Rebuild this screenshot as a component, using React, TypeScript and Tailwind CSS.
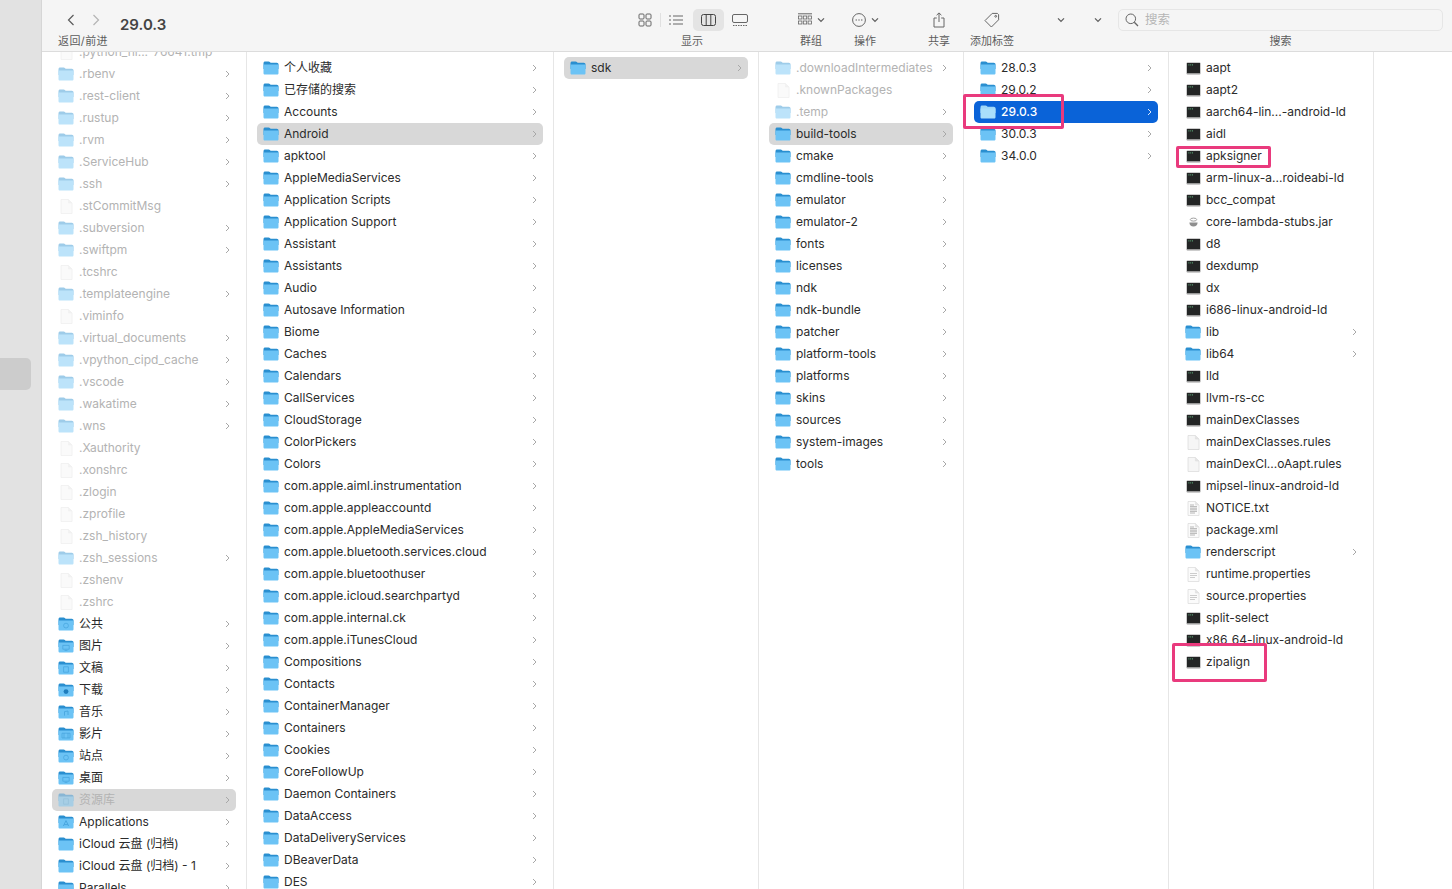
import React from 'react'

type Kind = 'folder' | 'exec' | 'doc' | 'text' | 'note' | 'jar'

interface Item {
  name: string
  kind: Kind
  dim?: boolean
  glyph?: string
  state?: 'gray' | 'blue'
}

const F = (name: string, extra: Partial<Item> = {}): Item => ({ name, kind: 'folder', ...extra })
const D = (name: string): Item => ({ name, kind: 'doc', dim: true })
const H = (name: string): Item => ({ name, kind: 'folder', dim: true })
const X = (name: string): Item => ({ name, kind: 'exec' })

const homeItems: Item[] = [
  D('.python_hi...-76641.tmp'), H('.rbenv'), H('.rest-client'), H('.rustup'), H('.rvm'), H('.ServiceHub'), H('.ssh'),
  D('.stCommitMsg'), H('.subversion'), H('.swiftpm'), D('.tcshrc'), H('.templateengine'), D('.viminfo'),
  H('.virtual_documents'), H('.vpython_cipd_cache'), H('.vscode'), H('.wakatime'), H('.wns'), D('.Xauthority'),
  D('.xonshrc'), D('.zlogin'), D('.zprofile'), D('.zsh_history'), H('.zsh_sessions'), D('.zshenv'), D('.zshrc'),
  F('公共', { glyph: 'public' }), F('图片', { glyph: 'pictures' }), F('文稿', { glyph: 'docs' }),
  F('下载', { glyph: 'download' }), F('音乐', { glyph: 'music' }), F('影片', { glyph: 'movies' }),
  F('站点', { glyph: 'sites' }), F('桌面', { glyph: 'desktop' }),
  { name: '资源库', kind: 'folder', dim: true, glyph: 'library', state: 'gray' },
  F('Applications', { glyph: 'apps' }), F('iCloud 云盘 (归档)'), F('iCloud 云盘 (归档) - 1'), F('Parallels'),
]

const libraryItems: Item[] = [
  F('个人收藏'), F('已存储的搜索'), F('Accounts'), F('Android', { state: 'gray' }), F('apktool'), F('AppleMediaServices'),
  F('Application Scripts'), F('Application Support'), F('Assistant'), F('Assistants'), F('Audio'),
  F('Autosave Information'), F('Biome'), F('Caches'), F('Calendars'), F('CallServices'), F('CloudStorage'),
  F('ColorPickers'), F('Colors'), F('com.apple.aiml.instrumentation'), F('com.apple.appleaccountd'),
  F('com.apple.AppleMediaServices'), F('com.apple.bluetooth.services.cloud'), F('com.apple.bluetoothuser'),
  F('com.apple.icloud.searchpartyd'), F('com.apple.internal.ck'), F('com.apple.iTunesCloud'), F('Compositions'),
  F('Contacts'), F('ContainerManager'), F('Containers'), F('Cookies'), F('CoreFollowUp'), F('Daemon Containers'),
  F('DataAccess'), F('DataDeliveryServices'), F('DBeaverData'), F('DES'),
]

const androidItems: Item[] = [F('sdk', { state: 'gray' })]

const sdkItems: Item[] = [
  H('.downloadIntermediates'), D('.knownPackages'), H('.temp'), F('build-tools', { state: 'gray' }), F('cmake'),
  F('cmdline-tools'), F('emulator'), F('emulator-2'), F('fonts'), F('licenses'), F('ndk'), F('ndk-bundle'), F('patcher'),
  F('platform-tools'), F('platforms'), F('skins'), F('sources'), F('system-images'), F('tools'),
]

const buildToolItems: Item[] = [
  F('28.0.3'), F('29.0.2'), F('29.0.3', { state: 'blue' }), F('30.0.3'), F('34.0.0'),
]

const versionItems: Item[] = [
  X('aapt'), X('aapt2'), X('aarch64-lin...-android-ld'), X('aidl'), X('apksigner'), X('arm-linux-a...roideabi-ld'),
  X('bcc_compat'), { name: 'core-lambda-stubs.jar', kind: 'jar' }, X('d8'), X('dexdump'), X('dx'), X('i686-linux-android-ld'),
  F('lib'), F('lib64'), X('lld'), X('llvm-rs-cc'), X('mainDexClasses'), { name: 'mainDexClasses.rules', kind: 'doc' },
  { name: 'mainDexCl...oAapt.rules', kind: 'doc' }, X('mipsel-linux-android-ld'), { name: 'NOTICE.txt', kind: 'note' },
  { name: 'package.xml', kind: 'note' }, F('renderscript'), { name: 'runtime.properties', kind: 'text' },
  { name: 'source.properties', kind: 'text' }, X('split-select'), X('x86_64-linux-android-ld'), X('zipalign'),
]

function FolderGlyph({ glyph }: { glyph: string }) {
  const c = '#45a3dc'
  if (glyph === 'download') return <circle cx="8" cy="8.6" r="2.4" fill="#1f7dbd" />
  if (glyph === 'apps') return <path d="M8 5.6 L5.4 11 M8 5.6 L10.6 11 M6.2 9.6 H9.8" stroke={c} strokeWidth="0.9" fill="none" />
  if (glyph === 'music') return <path d="M6.5 10.6 V6.6 L10 6 V10" stroke={c} strokeWidth="0.8" fill="none" />
  if (glyph === 'movies') return <path d="M4 6.2 H12 V11 H4 Z M6 6.2 V11 M10 6.2 V11" stroke={c} strokeWidth="0.7" fill="none" />
  if (glyph === 'desktop' || glyph === 'pictures') return <path d="M4.8 6.4 H11.2 V10.2 H4.8 Z M6.5 11.4 H9.5" stroke={c} strokeWidth="0.7" fill="none" />
  if (glyph === 'docs' || glyph === 'library') return <path d="M5.6 5.8 H10.4 V11.2 H5.6 Z" stroke={c} strokeWidth="0.7" fill="none" />
  return <circle cx="8" cy="8.6" r="2.4" stroke={c} strokeWidth="0.7" fill="none" />
}

function FileIcon({ item, selected }: { item: Item; selected: boolean }) {
  const dimClass = item.dim ? 'opacity-45' : ''
  if (item.kind === 'folder') {
    return (
      <svg width="16" height="14" viewBox="0 0 16 14" className={`shrink-0 ${dimClass}`}>
        <path d="M.5 2.2C.5 1.2 1.2.5 2.2.5h3.4c.6 0 .9.2 1.3.6l.7.7h6.2c1 0 1.7.7 1.7 1.7V8H.5Z" fill={selected ? '#9ed6f7' : '#2a8fd0'} />
        <path d="M.5 3.4h15v8.8c0 .8-.6 1.4-1.4 1.4H1.9c-.8 0-1.4-.6-1.4-1.4Z" fill={selected ? '#a9defb' : '#6cc3f5'} />
        {item.glyph && <FolderGlyph glyph={item.glyph} />}
      </svg>
    )
  }
  if (item.kind === 'exec') {
    return (
      <svg width="15" height="13" viewBox="0 0 15 13" className="shrink-0">
        <rect x="0.5" y="0.5" width="14" height="12" rx="1" fill="#9a9a9a" />
        <rect x="1" y="1" width="13" height="10" fill="#232525" />
        <path d="M2.4 2.9h1M4.2 2.9h1M6 2.9h1" stroke="#6fd795" strokeWidth="0.8" />
      </svg>
    )
  }
  if (item.kind === 'jar') {
    return (
      <svg width="15" height="13" viewBox="0 0 15 13" className="shrink-0">
        <ellipse cx="7.5" cy="3.6" rx="3.2" ry="1.5" fill="none" stroke="#a0a0a0" strokeWidth="1" />
        <path d="M3.4 6.4h8.2c0 2.6-1.7 4-4.1 4s-4.1-1.4-4.1-4Z" fill="#8f8f8f" />
      </svg>
    )
  }
  return (
    <svg width="13" height="15" viewBox="0 0 13 15" className={`mx-px shrink-0 ${dimClass}`}>
      <path d="M1 .5h7.4L12 4v10.5H1Z" fill={item.kind === 'doc' ? '#f6f6f6' : '#fbfbfb'} stroke="#dddddd" strokeWidth="0.8" />
      <path d="M8.4.5V4H12" fill="#e4e4e4" stroke="#dddddd" strokeWidth="0.6" />
      {item.kind === 'text' && (
        <path d="M3 6.5h7M3 8.5h7M3 10.5h5" stroke="#b8b8b8" strokeWidth="0.7" />
      )}
      {item.kind === 'note' && (
        <path d="M3 4h4M3 5.6h7M3 7.2h7M3 8.8h7M3 10.4h7M3 12h5" stroke="#a6a6a6" strokeWidth="0.8" />
      )}
    </svg>
  )
}

function Row({ item }: { item: Item }) {
  const selected = item.state === 'blue'
  let bg = ''
  if (item.state === 'gray') bg = 'bg-[#d8d8d8]'
  if (selected) bg = 'bg-[#0a63d8]'
  let text = 'text-[#2b2b2b]'
  if (item.dim) text = 'text-[#b3b3b3]'
  if (selected) text = 'text-white font-medium'
  return (
    <div className={`flex h-[22px] items-center rounded-[5px] pl-[6px] pr-[6px] ${bg}`}>
      <span className="flex w-[16px] shrink-0 justify-center">
        <FileIcon item={item} selected={selected} />
      </span>
      <span className={`ml-[5px] flex-1 truncate text-[12px] leading-[22px] ${text}`}>{item.name}</span>
      {item.kind === 'folder' && (
        <svg width="5" height="8" viewBox="0 0 5 8" className="shrink-0">
          <path d="M1 1l3 3-3 3" fill="none" stroke={selected ? '#d5e5fa' : '#a8a8a8'} strokeWidth="1" />
        </svg>
      )}
    </div>
  )
}

function Column({ items, className }: { items: Item[]; className: string }) {
  return (
    <div className={`h-full shrink-0 overflow-hidden border-r border-[#e6e6e6] pl-[10px] pr-[10px] ${className}`}>
      {items.map(item => <Row key={item.name} item={item} />)}
    </div>
  )
}

function ToolGroup({ label, className, children }: { label: string; className: string; children?: React.ReactNode }) {
  return (
    <div className={`flex shrink-0 flex-col items-center pt-[9px] ${className}`}>
      <div className="flex h-[22px] items-center justify-center text-[#5f5f5f]">{children}</div>
      <div className="mt-[3px] whitespace-nowrap text-[11px] leading-[14px] text-[#5c5c5c]">{label}</div>
    </div>
  )
}

function SmallCaret() {
  return (
    <svg width="8" height="6" viewBox="0 0 8 6">
      <path d="M1 1.4 4 4.4l3-3" fill="none" stroke="#5f5f5f" strokeWidth="1.3" />
    </svg>
  )
}

function Toolbar() {
  const stroke = { fill: 'none', stroke: '#666666', strokeWidth: 1 }
  return (
    <div className="flex h-[52px] shrink-0 border-b border-[#dcdcdc] bg-[#f5f5f5]">
      <div className="ml-[16px] flex w-[50px] shrink-0 flex-col pt-[9px]">
        <div className="flex h-[22px] items-center pl-[8px]">
          <svg width="10" height="14" viewBox="0 0 10 14">
            <path d="M7.5 2 2.5 7l5 5" fill="none" stroke="#5a5a5a" strokeWidth="1.2" />
          </svg>
          <svg width="10" height="14" viewBox="0 0 10 14" className="ml-[15px]">
            <path d="M2.5 2l5 5-5 5" fill="none" stroke="#b4b4b4" strokeWidth="1.2" />
          </svg>
        </div>
        <div className="mt-[3px] whitespace-nowrap text-[11px] leading-[14px] tracking-[0.4px] text-[#5c5c5c]">返回/前进</div>
      </div>
      <div className="ml-[12px] w-[60px] shrink-0 pt-[15px] text-[15px] font-semibold leading-[20px] text-[#444444]">29.0.3</div>

      <ToolGroup label="显示" className="ml-[452px] w-[120px]">
        <div className="ml-[2px] flex items-center">
          <svg width="14" height="14" viewBox="0 0 14 14">
            <g {...stroke}>
              <rect x="1" y="1" width="5" height="5" rx="1" /><rect x="8" y="1" width="5" height="5" rx="1" />
              <rect x="1" y="8" width="5" height="5" rx="1" /><rect x="8" y="8" width="5" height="5" rx="1" />
            </g>
          </svg>
          <div className="ml-[8px] h-[14px] w-px bg-[#e0e0e0]" />
          <svg width="14" height="12" viewBox="0 0 14 12" className="ml-[8px]">
            <path d="M4 2h10M4 6h10M4 10h10M0 2h2M0 6h2M0 10h2" {...stroke} />
          </svg>
          <div className="ml-[10px] flex h-[22px] w-[31px] items-center justify-center rounded-[5px] bg-[#e4e4e4]">
            <svg width="15" height="12" viewBox="0 0 15 12">
              <rect x="0.5" y="0.5" width="14" height="11" rx="2" fill="none" stroke="#444444" />
              <path d="M5.2 .5v11M9.8 .5v11" stroke="#444444" />
            </svg>
          </div>
          <svg width="16" height="13" viewBox="0 0 16 13" className="ml-[8px]">
            <rect x="0.5" y="0.5" width="15" height="8" rx="1.5" {...stroke} />
            <path d="M1 11.5h14" stroke="#666666" strokeDasharray="1.5 1" />
          </svg>
        </div>
      </ToolGroup>

      <ToolGroup label="群组" className="ml-[39px] w-[40px]">
        <svg width="14" height="14" viewBox="0 0 14 14">
          <path d="M0 .8h14" stroke="#666666" />
          <g {...stroke} strokeWidth="0.8">
            <rect x="0.5" y="3" width="3.4" height="3" /><rect x="5.3" y="3" width="3.4" height="3" /><rect x="10.1" y="3" width="3.4" height="3" />
            <rect x="0.5" y="8" width="3.4" height="3" /><rect x="5.3" y="8" width="3.4" height="3" /><rect x="10.1" y="8" width="3.4" height="3" />
          </g>
        </svg>
        <span className="ml-[5px]"><SmallCaret /></span>
      </ToolGroup>

      <ToolGroup label="操作" className="ml-[14px] w-[40px]">
        <svg width="14" height="14" viewBox="0 0 14 14">
          <circle cx="7" cy="7" r="6.4" {...stroke} />
          <circle cx="4.2" cy="7" r="0.7" fill="#666666" /><circle cx="7" cy="7" r="0.7" fill="#666666" /><circle cx="9.8" cy="7" r="0.7" fill="#666666" />
        </svg>
        <span className="ml-[5px]"><SmallCaret /></span>
      </ToolGroup>

      <ToolGroup label="共享" className="ml-[34px] w-[40px]">
        <svg width="12" height="16" viewBox="0 0 12 16">
          <path d="M3.8 6H1v9h10V6H8.2M6 10V1M3.6 3.2 6 .9l2.4 2.3" {...stroke} />
        </svg>
      </ToolGroup>

      <ToolGroup label="添加标签" className="ml-[9px] w-[48px]">
        <svg width="16" height="16" viewBox="0 0 16 16">
          <path d="M1 8.6 8.2 1.4h5.2l1.2 1.2v5.2L7.4 15Z" {...stroke} />
          <circle cx="11.7" cy="4.3" r="0.9" {...stroke} />
        </svg>
      </ToolGroup>

      <div className="ml-[37px] flex h-[40px] w-[16px] shrink-0 items-center justify-center"><SmallCaret /></div>
      <div className="ml-[21px] flex h-[40px] w-[16px] shrink-0 items-center justify-center"><SmallCaret /></div>

      <div className="ml-[12px] flex w-[325px] shrink-0 flex-col items-center pt-[9px]">
        <div className="flex h-[22px] w-full items-center rounded-[5px] border border-[#e6e6e6] pl-[6px]">
          <svg width="14" height="14" viewBox="0 0 14 14">
            <circle cx="5.8" cy="5.8" r="4.8" {...stroke} />
            <path d="M9.3 9.3 13 13" {...stroke} strokeWidth="1.3" />
          </svg>
          <span className="ml-[6px] text-[12.5px] text-[#b5b5b5]">搜索</span>
        </div>
        <div className="mt-[3px] text-[11px] leading-[14px] text-[#5c5c5c]">搜索</div>
      </div>
    </div>
  )
}

export default function App() {
  return (
    <div
      className="relative flex h-screen overflow-hidden bg-[#e2e2e2]"
      style={{ fontFamily: 'Inter, "Noto Sans CJK SC", sans-serif' }}
    >
      {/* Sliver of the window behind */}
      <div className="w-[42px] shrink-0 border-r border-[#d6d6d6]">
        <div className="mt-[358px] h-[32px] w-[31px] rounded-r-[5px] bg-[#cccccc]" />
      </div>
      <div className="flex min-w-0 flex-1 flex-col bg-white">
        <Toolbar />
        <div className="flex min-h-0 flex-1 overflow-hidden">
          <div className="h-full w-[205px] shrink-0 overflow-hidden border-r border-[#e6e6e6] pl-[10px] pr-[10px]">
            <div className="-mt-[11px]">
              {homeItems.map(item => <Row key={item.name} item={item} />)}
            </div>
          </div>
          <Column items={libraryItems} className="w-[307px] pt-[5px]" />
          <Column items={androidItems} className="w-[205px] pt-[5px]" />
          <Column items={sdkItems} className="w-[205px] pt-[5px]" />
          <Column items={buildToolItems} className="w-[205px] pt-[5px]" />
          <Column items={versionItems} className="w-[205px] pt-[5px]" />
        </div>
      </div>

      {/* Annotations drawn over the screenshot */}
      <div className="absolute left-[963px] top-[94px] h-[35px] w-[101px] rounded-[2px] border-[3px] border-[#e93a7d]" />
      <div className="absolute left-[1176px] top-[146px] h-[22px] w-[95px] rounded-[2px] border-[3px] border-[#e93a7d]" />
      <div className="absolute left-[1172px] top-[643px] h-[39px] w-[95px] rounded-[2px] border-[3px] border-[#e93a7d]" />
    </div>
  )
}
